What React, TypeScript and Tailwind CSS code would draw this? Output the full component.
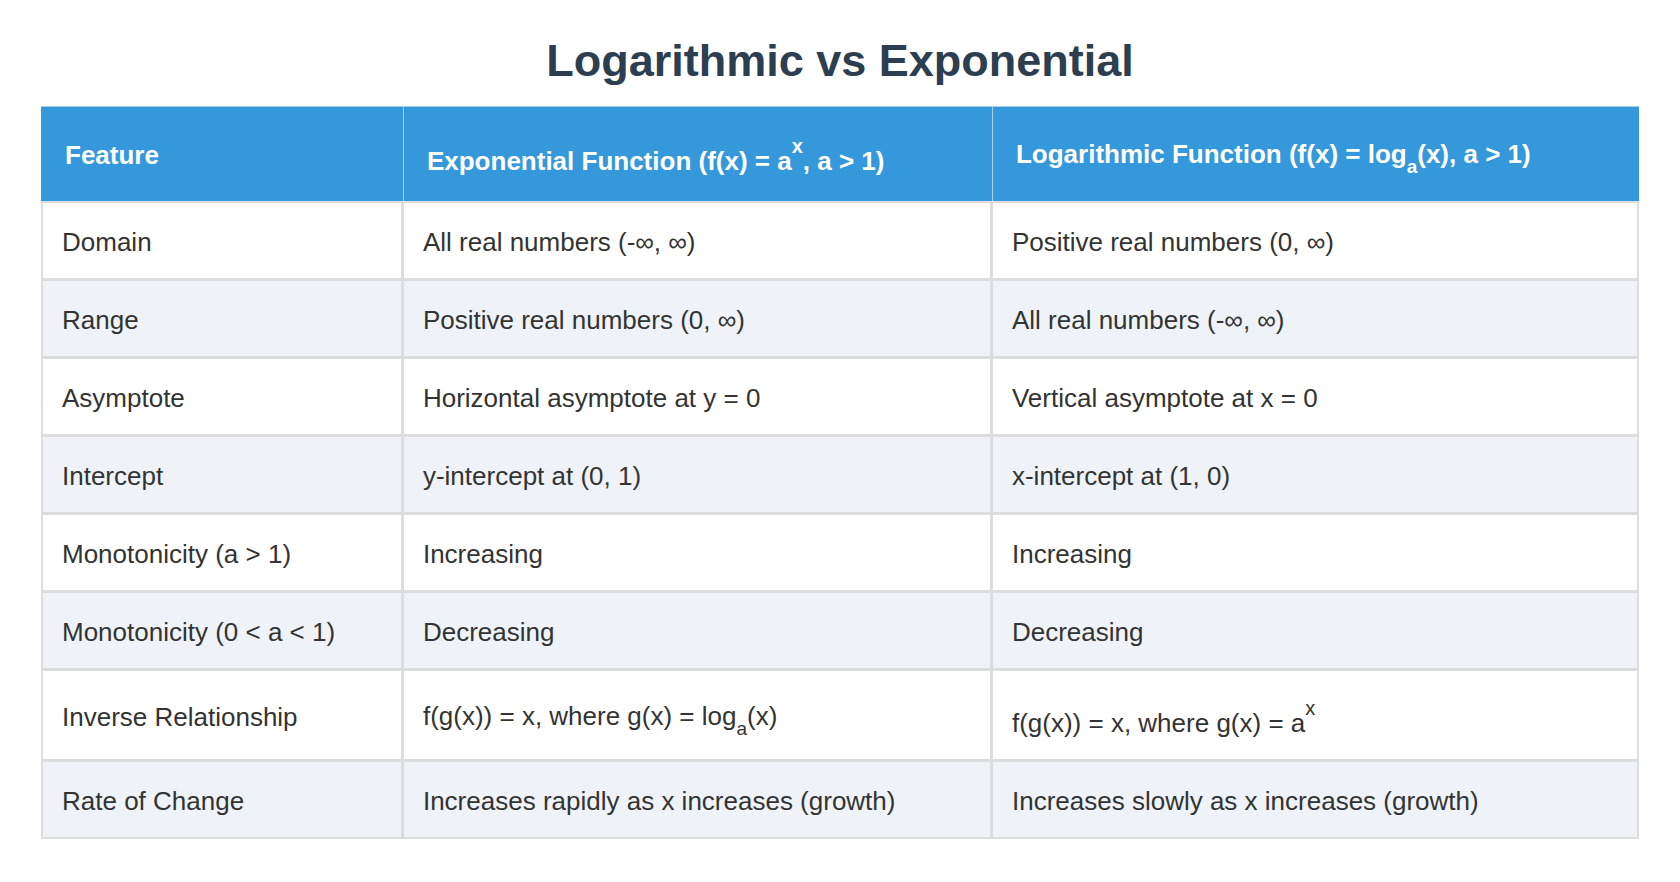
const rows: { feature: string; exp: React.ReactNode; log: React.ReactNode }[] = [
  { feature: "Domain", exp: "All real numbers (-∞, ∞)", log: "Positive real numbers (0, ∞)" },
  { feature: "Range", exp: "Positive real numbers (0, ∞)", log: "All real numbers (-∞, ∞)" },
  { feature: "Asymptote", exp: "Horizontal asymptote at y = 0", log: "Vertical asymptote at x = 0" },
  { feature: "Intercept", exp: "y-intercept at (0, 1)", log: "x-intercept at (1, 0)" },
  { feature: "Monotonicity (a > 1)", exp: "Increasing", log: "Increasing" },
  { feature: "Monotonicity (0 < a < 1)", exp: "Decreasing", log: "Decreasing" },
  {
    feature: "Inverse Relationship",
    exp: (
      <>
        f(g(x)) = x, where g(x) = log<Sub>a</Sub>(x)
      </>
    ),
    log: (
      <>
        f(g(x)) = x, where g(x) = a<Sup>x</Sup>
      </>
    ),
  },
  {
    feature: "Rate of Change",
    exp: "Increases rapidly as x increases (growth)",
    log: "Increases slowly as x increases (growth)",
  },
];

function Sup({ children }: { children: React.ReactNode }) {
  return <sup className="static top-0 text-[20px] leading-[35px] align-[17px]">{children}</sup>;
}

function Sub({ children }: { children: React.ReactNode }) {
  return <sub className="static bottom-0 text-[19px] leading-[19px] align-[-10px]">{children}</sub>;
}

export default function App() {
  return (
    <div className="min-h-screen bg-white px-[41px] pt-[38px] font-['Liberation_Sans',Arial,sans-serif]">
      <h1 className="mb-[23px] text-center text-[45px] font-bold leading-none text-[#2c3e50]">
        Logarithmic vs Exponential
      </h1>

      <table className="w-full table-fixed border-separate border-spacing-0 text-[26px] leading-[39px] text-[#333333]">
        <colgroup>
          <col className="w-[22.65%]" />
          <col className="w-[36.86%]" />
          <col />
        </colgroup>
        <thead>
          <tr className="bg-[#3498db] text-left font-bold text-white">
            <th className="border-t border-[#a6cdea] px-[24px] pb-[20px] pt-[22px]">Feature</th>
            <th className="border-l border-t border-[#a6cdea] px-[23px] pb-[20px] pt-[22px]">
              Exponential Function (f(x) = a<Sup>x</Sup>, a &gt; 1)
            </th>
            <th className="border-l border-t border-[#a6cdea] px-[23px] pb-[20px] pt-[22px]">
              Logarithmic Function (f(x) = log<Sub>a</Sub>(x), a &gt; 1)
            </th>
          </tr>
        </thead>
        <tbody>
          {rows.map((row, i) => {
            const bg = i % 2 === 1 ? "bg-[#eff3f8]" : "bg-white";
            const top = i === 0 ? "border-t-2" : "border-t";
            return (
              <tr key={row.feature} className={bg}>
                <td className={`${top} border-b-2 border-l-2 border-r-2 border-[#dddddd] px-[19px] pb-[16px] pt-[20px]`}>
                  {row.feature}
                </td>
                <td className={`${top} border-b-2 border-l border-r-2 border-[#dddddd] px-[19px] pb-[16px] pt-[20px]`}>
                  {row.exp}
                </td>
                <td className={`${top} border-b-2 border-l border-r-2 border-[#dddddd] px-[19px] pb-[16px] pt-[20px]`}>
                  {row.log}
                </td>
              </tr>
            );
          })}
        </tbody>
      </table>
    </div>
  );
}
